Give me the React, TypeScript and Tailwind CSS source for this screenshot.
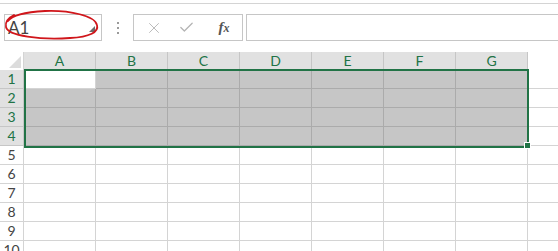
import { Check, X } from "lucide-react";

const COLUMNS = ["A", "B", "C", "D", "E", "F", "G"];
const ROWS = [1, 2, 3, 4, 5, 6, 7, 8, 9, 10];

const isSelected = (row: number) => row <= 4;

const HeaderRow = () => (
  <div className="flex h-[18px]">
    <div className="relative w-[24px] shrink-0 border-r border-[#d4d4d4] bg-white">
      <svg className="absolute bottom-[2px] right-[2px]" width="12" height="12">
        <polygon points="12,0 12,12 0,12" fill="#dcdcdc" />
      </svg>
    </div>
    {COLUMNS.map((col) => (
      <div
        key={col}
        className="flex w-[72px] shrink-0 items-center justify-center border-r border-[#c6c6c6] bg-[#e1e1e1] text-[14px] leading-none text-[#217346]"
      >
        {col}
      </div>
    ))}
    <div className="flex-1 bg-white" />
  </div>
);

const GridRow = ({ row }: { row: number }) => {
  const selected = isSelected(row);

  return (
    <div className="flex h-[19px]">
      <div
        className={
          selected
            ? "flex w-[24px] shrink-0 items-center justify-center border-b border-r border-[#c6c6c6] bg-[#e1e1e1] text-[14px] leading-none text-[#217346]"
            : "flex w-[24px] shrink-0 items-center justify-center border-b border-r border-[#d4d4d4] bg-white text-[14px] leading-none text-[#444444]"
        }
      >
        {row}
      </div>
      {COLUMNS.map((col, i) => {
        const active = row === 1 && i === 0;
        if (selected && !active) {
          return (
            <div
              key={col}
              className="w-[72px] shrink-0 border-b border-r border-[#ababab] bg-[#c6c6c6]"
            />
          );
        }
        return (
          <div
            key={col}
            className="w-[72px] shrink-0 border-b border-r border-[#d4d4d4] bg-white"
          />
        );
      })}
      <div className="flex-1 border-b border-[#d4d4d4] bg-white" />
    </div>
  );
};

const App = () => {
  return (
    <div
      className="relative h-[251px] w-[558px] overflow-hidden bg-white"
      style={{ fontFamily: '"Lato", "Open Sans", sans-serif' }}
    >
      <div className="h-[4px] border-b border-[#d4d4d4]" />

      <div className="mt-[10px] flex h-[27px] items-stretch">
        <div className="relative ml-[4px] flex w-[98px] items-center border border-[#c6c6c6] pl-[3px] text-[17px] text-[#444444]">
          A1
          <svg className="absolute right-[6px] top-[11px]" width="6" height="6">
            <polygon points="6,0 6,6 0,6" fill="#6b6b6b" />
          </svg>
        </div>

        <div className="flex w-[31px] flex-col items-center justify-center gap-[3px]">
          <span className="h-[2px] w-[2px] bg-[#9a9a9a]" />
          <span className="h-[2px] w-[2px] bg-[#9a9a9a]" />
          <span className="h-[2px] w-[2px] bg-[#9a9a9a]" />
        </div>

        <div className="flex w-[110px] items-center border border-[#c6c6c6]">
          <div className="flex w-[38px] justify-center pl-[2px]">
            <X size={18} strokeWidth={1.2} color="#b4b4b4" />
          </div>
          <div className="flex w-[28px] justify-center">
            <Check size={17} strokeWidth={1.8} color="#b4b4b4" />
          </div>
          <div
            className="flex flex-1 justify-center pl-[6px] text-[15px] font-bold italic text-[#555555]"
            style={{ fontFamily: '"Liberation Serif", serif' }}
          >
            <span>
              f<span className="text-[12px]">x</span>
            </span>
          </div>
        </div>

        <div className="ml-[3px] flex-1 border-y border-l border-[#c6c6c6]" />
      </div>

      <div className="relative mt-[11px]">
        <HeaderRow />
        {ROWS.map((row) => (
          <GridRow key={row} row={row} />
        ))}

        <div className="pointer-events-none absolute left-[24px] top-[17px] h-[79px] w-[505px] border-2 border-[#217346]" />
        <div className="absolute left-[524px] top-[90px] h-[7px] w-[7px] border border-white bg-[#217346]" />
      </div>

      <svg
        className="pointer-events-none absolute left-0 top-0"
        width="120"
        height="45"
      >
        <path
          d="M14 15 C8 18, 5 22, 6 27 C8 36, 40 40, 70 38 C90 37, 99 32, 97 25 C95 16, 70 10, 45 11 C28 12, 13 14, 8 21"
          fill="none"
          stroke="#d0161b"
          strokeWidth="1.8"
          strokeLinecap="round"
        />
      </svg>
    </div>
  );
};

export default App;
